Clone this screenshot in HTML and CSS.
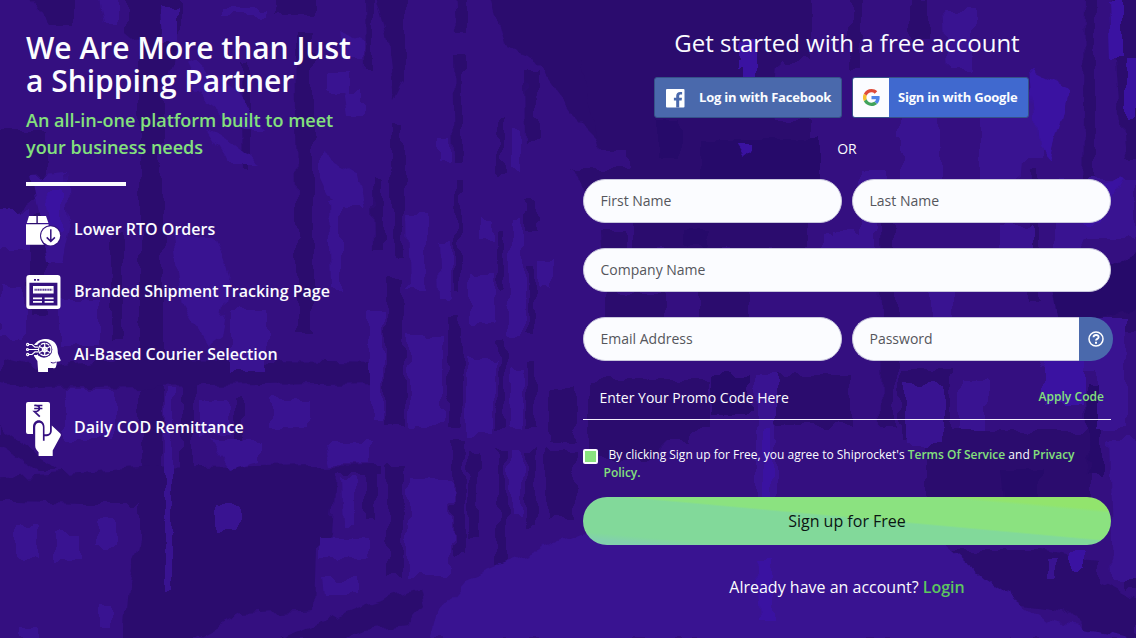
FILE: index.html
```html
<!DOCTYPE html>
<html lang="en">
<head>
<meta charset="utf-8">
<title>Shiprocket - Sign up</title>
<link rel="stylesheet" href="styles.css">
</head>
<body>
<svg class="backdrop" viewBox="0 0 1136 638" preserveAspectRatio="none" aria-hidden="true">
  <defs>
    <filter id="rough" x="0" y="0" width="1136" height="638" filterUnits="userSpaceOnUse" color-interpolation-filters="sRGB">
      <feTurbulence type="fractalNoise" baseFrequency="0.06 0.04" numOctaves="2" seed="8" result="n"/>
      <feDisplacementMap in="SourceGraphic" in2="n" scale="16" xChannelSelector="R" yChannelSelector="G"/>
      <feGaussianBlur stdDeviation=".6"/>
    </filter>
  </defs>
  <rect width="1136" height="638" fill="#340f80"/>
  <g filter="url(#rough)">
    <g fill="#2b0c6e">
      <path d="M128-10h53v40l-18 60v550h-23V40l-12-10zM295 30h18v300h-16V200zM272-10h44v25h-44zM365-10h9v78h-8zM375-10h29v90l-10 20-6-60zM453-10h14v40h-12zM490-10h320v70H780l-10 80H600l-30-30-40-55-25-10zM-10 130h58v60l-30 20H-10zM25-10h47v35H48z"/>
      <path d="M393 125h10v135h-10zM385 280h19v145h-19zM373 180h10v70h-9zM453 55h10v105h-8zM455 180h6v110h-6zM448 315h14v113h-14zM498 115h5v60h-5zM498 230h5v60h-5zM498 340h7v90h-7zM526 70h10v70h-9zM527 200h8v30h-8zM527 265h8v70h-8zM526 360h9v68h-9zM452 440h13v115h-13zM468 450h10v85h-10zM498 450h8v125h-8zM526 450h9v75h-9zM546 450h30v68h-30zM548 390h25v50h-25zM240 60h10v110h-8z"/>
      <path d="M-10 478l30-2 120-8 240-4v10H336l-4 60-16 14-2 62-70 4-56 30h-64l4-60 14-50v-30H80l-60-2H-10zM0 360l30 8 90-10 260 5v20l-240 4-100 2-40-6zM0 425l60 46H40L0 445zM182 380h10v120h-10zM235 400h9v70h-9zM387 465h17v112h-17zM365 470h8v50h-8zM280 640l90-36 50-15 4 16-18 20-40 5-25 10z"/>
      <path d="M630 120h180v130H633v-30h-14l-50-50h61zM580 60h70v90h-50zM600 230h24v60h-20zM606 293h60v60h-60zM700 290h50v50h-50zM590 380h100v60h-20l-20 20h-60zM686 380h22v50h-22zM770 375h80v50h-80zM900 370h50v70h-50zM925 430h165v104H960l-35-34zM928 550h110l60 10v20l38 20v40h-40l-30-30-70-10-60-40zM1110-10h40v170h-26zM1060 300h80v30h-80zM1125 530h20v60h-20zM880 210h16v220h-14zM1030 170h10v130h-12zM1085 0h10v220h-12zM850 0h12v70h-12zM910 0h18v40h-18zM30 215h18v100H30zM110 230h14v110h-14z"/>
    </g>
    <g fill="#260a6a">
      <path d="M700 140h120v60h-120zM1052 290l88-40v60l-80 20zM710 375h40v40h-40zM1000 470h40v60h-34zM1086 385h16v90h-14zM660 120h20v40h-20zM681 230h30v16h-30z"/>
    </g>
    <g fill="#391391">
      <path d="M97-10h20v36h-14zM160 5h18v38h-16zM223 8h42v6h-42zM185 60l40 20 42 50h-24l-48-40zM205 130l30 14 28 20h-36zM322 153l34 20 10 34h-30l-14-30zM340 30l24 10v18h-20zM325 72h24v22h-24zM343 92h20v26h-16zM-10 210h40v40H-10zM30 175l36-3 4 50-10 40H46zM172 235h44l14 40-10 60-14 10-24-40zM328 200h14v90h-12zM230 310h36v60h-36zM0 285h24v55H0zM60 300h40v45H60z"/>
      <path d="M407 215h20v75h-18zM437 240h15v60h-13zM408 335h35v90h-35zM466 360h29v75h-29zM470 275h25v48h-25zM510 218h13v120h-13zM370 310h13v110h-13zM437 138h14v22h-14zM510 130h12v40h-12zM510 450h12v66h-12zM510 370h12v60h-12zM540 260h12v28h-12zM480 220h14v20h-14z"/>
      <path d="M408 480h43v95h-43zM320 537h50v22h-50zM323 578h36v16h-34zM340 477h16v50h-14zM215 505h22v26h-22zM210 440h52v22l-30 8zM325 443h45v20h-40zM16 525h22v30H16zM56 534h22v28H56zM98 520h18v26H98zM65 390h50v50H65zM165 390h8v200h-8zM200 400h30v34h-30zM270 400h40v28h-40zM100 605h10v24h-10zM20 628h18v12H20zM430 640l6-24 30-36 50-20 70-30h340l60 50 60 40 90 20z"/>
      <path d="M860 170h26v50h-10v40h-16zM900 80h40v120h-40zM945 10h30v60h-26zM980 90h60v70h-20l-6 60h-34zM1000 225h34v60h-34zM1055 180h80v60h-50l-30 40zM930 260h24v60h-24zM820 235h40v40h-40zM905 385h40v60h-40zM960 380h26v50h-26zM1040 320h86v110h-30v-60h-56zM755 375h22v160h-22zM1108 440h30v140h-26zM830 230h24v20h-24zM1046 560h12v20h-12z"/>
    </g>
    <g fill="#3a12a1">
      <path d="M1030 70l40 20-20 70-14-16zM1050 195l74-16-24 44h-46zM1044 345h40v60h-40zM1108 0h14v60h-12zM762 430h10v90h-10zM757 560h16v60h-12zM735 62h18v10h-18zM737 145h16v6l-8 6zM45 190h18v40H48zM1070 550h16v18h-16zM740 40h14v60h-14zM1128 60h10v60h-10z"/>
    </g>
  </g>
</svg>
<main class="page">
  <section class="intro">
    <h1 class="title">We Are More than Just<br>a Shipping Partner</h1>
    <p class="subtitle">An all-in-one platform built to meet<br>your business needs</p>
    <div class="rule"></div>
    <ul class="features">
      <li class="feature feature-orders">
        <svg class="icon" width="35" height="30" viewBox="0 0 35 30">
          <path fill="#fff" d="M3 0h7.400v7H.8zM11.800 0H20l2.400 7H11.800zM0 8.200h22.600v3A10.700 10.700 0 0 0 18 28.800H0z"/>
          <circle cx="24.600" cy="19.800" r="10.600" fill="#34117f"/>
          <circle cx="24.600" cy="19.800" r="9.600" fill="#fff"/>
          <path d="M24.800 13.300v11.500M20.700 21.400l4.100 4 4.100-4" fill="none" stroke="#34117f" stroke-width="1.500"/>
        </svg>
        <span>Lower RTO Orders</span>
      </li>
      <li class="feature feature-page">
        <svg class="icon" width="35" height="34" viewBox="0 0 35 34">
          <rect x=".3" width="34.200" height="34" rx="3" fill="#fff"/>
          <path fill="#34117f" d="M8 4h2v1.800H8zM11.200 4h2v1.800h-2zM3.400 7.800h28v22.800h-28z"/>
          <path fill="#fff" d="M7 11h20.600v7.600H7zM7 22.500h9v1.700H7zM18.600 22.500h9v1.700h-9zM7 26h9v1.800H7zM18.600 26h9v1.800h-9z"/>
          <path d="M8.500 14.800h17.800" stroke="#34117f" stroke-width="1.900" stroke-dasharray="1.300 .4" opacity=".8"/>
        </svg>
        <span>Branded Shipment Tracking Page</span>
      </li>
      <li class="feature feature-ai">
        <svg class="icon" width="35" height="34" viewBox="0 0 35 34">
          <path fill="#fff" d="M8 6C11 1.500 16 0 20 0c7 0 11.500 5 11.700 11.500 0 2 .3 3.400 1 5L34.600 21c.3.800-.2 1.400-1.600 1.500l-2.500.2.200 2-.8 3.200c-.3 1.200-1.600 1.400-3.700 1.200H22V33H12.200l-.8-11L8 17z"/>
          <path fill="#34117f" d="M7 6h4v10H7z"/>
          <circle cx="18" cy="10.500" r="8.300" fill="#34117f"/>
          <g fill="none" stroke="#fff" stroke-width="1.200">
            <circle cx="18.700" cy="10.500" r="2.300"/>
            <circle cx="18.700" cy="10.500" r="6.200" stroke-dasharray="4.200 .7"/>
            <path d="M18.700 4v13M13 7.200l11.400 6.600M13 13.800l11.400-6.600"/>
            <path d="M2.500 5.500H6l3 2.700h3M2 10.500h11M2.500 15.500H6l3-2.700h3"/>
            <circle cx="1.700" cy="5.500" r="1.100"/><circle cx="1.500" cy="10.500" r="1"/><circle cx="1.700" cy="15.500" r="1.100"/>
          </g>
          <path d="M24.800 23.300c1.700 1 3.400.8 5-.2" fill="none" stroke="#34117f" stroke-width="1"/>
        </svg>
        <span>AI-Based Courier Selection</span>
      </li>
      <li class="feature feature-cod">
        <svg class="icon" width="35" height="54" viewBox="0 0 35 54">
          <path fill="#fff" d="M2 0h20a2 2 0 0 1 2 2v27c0 2.300-1.200 3.300-3.500 3.300h-2V25c0-9-11.500-9-11.500 0v7H2a2 2 0 0 1-2-2V2a2 2 0 0 1 2-2z"/>
          <path fill="#fff" d="M9.200 25c0-5.700 7.700-5.700 7.700 0v13.700h1.700V34.300c4.300.3 7.200-1.800 7.200-5.500v-5.200l8.500 7.800c.7.700.8 1.500.3 2.500l-7.900 14.700V54H12.600v-3.800c-2.300-2.300-3.400-3.700-3.400-6.700z"/>
          <path d="M8.200 3.500h8.200M8.200 6.500h8.200M8.200 3.500c7-1 7 6.300.3 6.200l5.300 5" fill="none" stroke="#34117f" stroke-width="1.700"/>
        </svg>
        <span>Daily COD Remittance</span>
      </li>
    </ul>
  </section>

  <section class="signup">
    <h2 class="signup-title">Get started with a free account</h2>
    <div class="social">
      <button class="social-btn facebook" type="button">
        <svg class="fb-icon" width="19" height="19" viewBox="0 0 19 19">
          <rect width="18.500" height="18.500" rx="1" fill="#fff"/>
          <path fill="#4a69ac" d="M10.200 18.500v-7H7.900V8.700h2.300V7c0-2.700 1.600-4 4-4l1.900.1v2.500h-1.400c-1.100 0-1.500.6-1.500 1.500v1.600H16l-.4 2.800h-2.400v7z"/>
        </svg>
        <span>Log in with Facebook</span>
      </button>
      <button class="social-btn google" type="button">
        <span class="g-box">
          <svg width="17" height="17" viewBox="0 0 48 48">
            <path fill="#de4b39" d="M24 9.500c3.500 0 6.700 1.200 9.200 3.600l6.900-6.900C35.900 2.400 30.500 0 24 0 14.600 0 6.500 5.400 2.600 13.200l8 6.200C12.400 13.700 17.700 9.500 24 9.500z"/>
            <path fill="#4f84e8" d="M47 24.600c0-1.600-.2-3.100-.4-4.600H24v9h12.900c-.6 3-2.200 5.500-4.700 7.200l7.700 6c4.500-4.200 7.100-10.400 7.100-17.600z"/>
            <path fill="#f5bf2e" d="M10.500 28.600a14.500 14.500 0 0 1 0-9.200l-8-6.200a24 24 0 0 0 0 21.600z"/>
            <path fill="#40a35a" d="M24 48c6.500 0 11.900-2.100 15.900-5.800l-7.700-6c-2.200 1.500-4.900 2.300-8.200 2.300-6.300 0-11.600-4.200-13.500-9.900l-8 6.200C6.500 42.600 14.600 48 24 48z"/>
          </svg>
        </span>
        <span class="g-text">Sign in with Google</span>
      </button>
    </div>
    <div class="or">OR</div>
    <form class="form">
      <div class="row">
        <input class="field" type="text" placeholder="First Name">
        <input class="field" type="text" placeholder="Last Name">
      </div>
      <div class="row">
        <input class="field" type="text" placeholder="Company Name">
      </div>
      <div class="row">
        <input class="field" type="text" placeholder="Email Address">
        <div class="password">
          <input class="field field-joined" type="password" placeholder="Password">
          <span class="help">
            <svg width="16" height="16" viewBox="0 0 16 16" fill="none" stroke="#fff">
              <circle cx="8" cy="8" r="7" stroke-width="1.500"/>
              <path d="M5.500 6.200c.2-3 5.200-2.900 5.100 0 0 1.700-2.600 1.700-2.600 3.400" stroke-width="1.900"/>
              <path d="M7 11.700h2" stroke-width="1.900"/>
            </svg>
          </span>
        </div>
      </div>
      <div class="promo">
        <span class="promo-label">Enter Your Promo Code Here</span>
        <a class="promo-apply">Apply Code</a>
      </div>
      <div class="terms">
        <span class="checkbox"></span>
        <p class="terms-text">By clicking Sign up for Free, you agree to Shiprocket's <b>Terms Of Service</b> and <b>Privacy<br>Policy.</b></p>
      </div>
      <button class="submit" type="button">Sign up for Free</button>
    </form>
    <p class="login">Already have an account? <a class="login-link">Login</a></p>
  </section>
</main>
</body>
</html>
```

FILE: styles.css
```css
* { box-sizing: border-box; }

body {
  margin: 0;
  background: #340f80;
  color: #fbfcff;
  font-family: "Open Sans", "Noto Sans", sans-serif;
}

h1, h2, p, ul { margin: 0; padding: 0; font-weight: 400; }
button, input { font-family: inherit; margin: 0; }

.backdrop {
  position: absolute;
  inset: 0;
  width: 1136px;
  height: 638px;
}

.page {
  position: relative;
  display: flex;
  justify-content: space-between;
  width: 1136px;
  height: 638px;
  padding: 0 25px 0 26px;
  overflow: hidden;
}

.intro { width: 500px; padding-top: 31px; }

.title { font-size: 30px; line-height: 33px; font-weight: 600; white-space: nowrap; }

.subtitle {
  margin-top: 10px;
  color: #84e07d;
  font-size: 18px;
  line-height: 27px;
  font-weight: 600;
}

.rule { width: 100px; height: 4px; margin-top: 21px; background: #fbfcff; }

.features { list-style: none; padding-top: 30px; }
.feature {
  display: flex;
  align-items: center;
  gap: 13px;
  font-size: 16px;
  line-height: 22px;
  font-weight: 600;
}
.icon { flex: none; display: block; }
.feature-orders { height: 30px; margin-bottom: 29px; }
.feature-orders span { margin-top: -4px; }
.feature-page { height: 34px; margin-bottom: 30px; }
.feature-page span { margin-top: -3px; }
.feature-ai { height: 34px; margin-bottom: 29px; }
.feature-ai span { margin-top: -5px; }
.feature-cod { height: 54px; }
.feature-cod span { margin-top: -4px; }

.signup { width: 528px; padding-top: 26px; }

.signup-title { font-size: 24px; line-height: 33px; text-align: center; }

.social { display: flex; gap: 10px; padding: 18px 0 0 71px; }
.social-btn {
  display: flex;
  align-items: center;
  height: 41px;
  padding: 0;
  border: 1px solid #355288;
  border-radius: 3px;
  color: #fbfcff;
  font-size: 13px;
  font-weight: 700;
  letter-spacing: -0.21px;
  white-space: nowrap;
}
.facebook { width: 188px; padding: 0 0 0 11px; gap: 14px; background: #4a69ac; }
.social-btn span:last-child { margin-top: -1px; }
.fb-icon { margin-top: 2px; }
.google { width: 177px; background: #4069cf; }
.g-box {
  display: flex;
  align-items: center;
  justify-content: center;
  width: 36px;
  height: 39px;
  background: #fbfcff;
  border-radius: 2px 0 0 2px;
}
.g-text { padding-left: 9px; }

.or { margin-top: 21px; font-size: 14px; line-height: 20px; text-align: center; }

.form { padding-top: 20px; }
.row { display: flex; gap: 10px; height: 44px; margin-bottom: 25px; }
.field {
  flex: 1;
  min-width: 0;
  height: 44px;
  padding: 0 17px 2px 16.500px;
  border: 1px solid #c9c8dd;
  border-radius: 22px;
  background: #fbfcff;
  font-size: 14px;
}
.field::placeholder { color: #55565c; opacity: 1; }
.password { display: flex; min-width: 0; margin-right: -2px; }
.row > .password { flex: 0 0 261px; }
.field-joined { border-radius: 22px 0 0 22px; border-right: 0; }
.help {
  display: flex;
  align-items: center;
  justify-content: center;
  width: 34px;
  height: 44px;
  border-radius: 0 22px 22px 0;
  background: #4a69ac;
}

.promo {
  display: flex;
  justify-content: space-between;
  height: 34px;
  padding: 0 7px 0 16.500px;
  border-bottom: 1px solid #f3effc;
}
.promo-label { font-size: 14px; line-height: 24px; }
.promo-apply { color: #84e07d; font-size: 12px; line-height: 22px; font-weight: 600; letter-spacing: 0.05px; }

.terms { display: flex; padding-top: 26px; }
.checkbox {
  flex: none;
  width: 15px;
  height: 15px;
  margin-top: 3px;
  border: 2px solid #fbfcff;
  border-radius: 2px;
  background: #89e27f;
}
.terms-text {
  padding-left: 5.500px;
  font-size: 12px;
  line-height: 18px;
  text-indent: 5px;
  white-space: nowrap;
}
.terms-text b { color: #84e07d; font-weight: 600; }

.submit {
  display: block;
  width: 528px;
  height: 48px;
  margin-top: 15px;
  padding: 0;
  border: 0;
  border-radius: 24px;
  background: linear-gradient(to top right, #82d0ad 0 7%, #82d99a 14% 53%, #8be280 55% 83%, #92e46d 86%);
  color: #0b1512;
  font-size: 16px;
}

.login { margin-top: 30px; font-size: 16px; line-height: 24px; text-align: center; }
.login-link { color: #5dc65f; font-weight: 600; }
```
